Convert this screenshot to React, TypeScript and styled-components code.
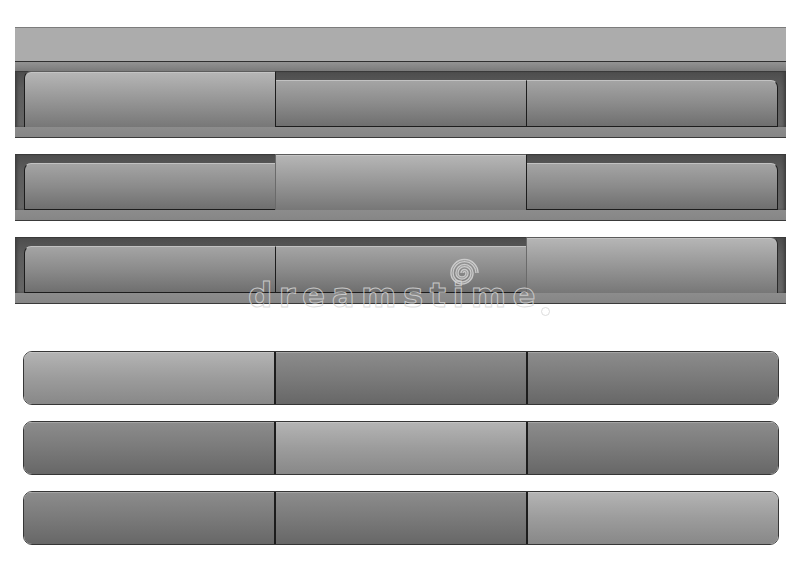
import styled, { createGlobalStyle, css } from "styled-components";

const GlobalStyle = createGlobalStyle`
  html, body {
    margin: 0;
    padding: 0;
    background: #fff;
  }
  body {
    font-family: "DejaVu Sans", sans-serif;
  }
`;

const Page = styled.div`
  position: relative;
  width: 800px;
  height: 574px;
  box-sizing: border-box;
  padding: 27px 14px 0 15px;
  display: flex;
  flex-direction: column;
  overflow: hidden;
`;

const TabBar = styled.div`
  display: flex;
  flex-direction: column;
  margin-bottom: 16px;
`;

const Header = styled.div`
  height: 33px;
  background: #acacac;
  border-top: 1px solid #7c7c7c;
  border-bottom: 1px solid #2f2f2f;
`;

const Stripe = styled.div`
  height: 9px;
  background: linear-gradient(#939393, #7a7a7a);
`;

const Track = styled.div`
  height: 56px;
  display: flex;
  align-items: flex-end;
  padding: 0 8px 0 9px;
  background: linear-gradient(#4c4c4c, #5c5c5c 30%, #666);
  box-shadow: inset 0 1px 0 #3a3a3a, inset 3px 0 3px -1px #3e3e3e,
    inset -3px 0 3px -1px #3e3e3e;
`;

type Pos = "first" | "mid" | "last";

const Tab = styled.div<{ $active?: boolean; $pos: Pos }>`
  flex: 1;
  box-sizing: border-box;
  height: 47px;
  border: 1px solid #1c1c1c;
  border-top-color: #c2c2c2;
  background: linear-gradient(#a4a4a4, #8b8b8b 50%, #6f6f6f);
  margin-left: ${(p) => (p.$pos === "first" ? "0" : "-1px")};
  border-top-left-radius: ${(p) => (p.$pos === "first" ? "7px" : "0")};
  border-top-right-radius: ${(p) => (p.$pos === "last" ? "7px" : "0")};

  ${(p) =>
    p.$active &&
    css`
      position: relative;
      height: 100%;
      border-bottom: none;
      border-top-color: #5c5c5c;
      border-left-color: ${p.$pos === "first" ? "#1c1c1c" : "#6a6a6a"};
      border-right-color: ${p.$pos === "last" ? "#2a2a2a" : "#1c1c1c"};
      background: linear-gradient(#b6b6b6, #979797 50%, #777);
      box-shadow: inset 0 1px 0 #c4c4c4;
    `}
`;

const BottomStrip = styled.div`
  height: 10px;
  background: linear-gradient(#8c8c8c, #868686);
  border-bottom: 1px solid #3a3a3a;
`;

const ButtonList = styled.div`
  display: flex;
  flex-direction: column;
  gap: 16px;
  margin-top: 31px;
  padding: 0 7px 0 8px;
`;

const ButtonRow = styled.div`
  display: flex;
  height: 54px;
  box-sizing: border-box;
  border: 1px solid #363636;
  border-radius: 9px;
  overflow: hidden;
`;

const Segment = styled.div<{ $active?: boolean }>`
  flex: 1;
  background: ${(p) =>
    p.$active
      ? "linear-gradient(#b4b4b4, #9c9c9c 50%, #888)"
      : "linear-gradient(#8c8c8c, #7a7a7a 50%, #676767)"};
  box-shadow: inset 0 1px 0 rgba(255, 255, 255, 0.22);

  & + & {
    border-left: 2px solid #1c1c1c;
  }
`;

const Watermark = styled.div`
  position: absolute;
  left: 248px;
  top: 256px;
  width: 310px;
  height: 62px;
  pointer-events: none;
`;

const MarkText = styled.span`
  position: absolute;
  left: 0;
  top: 19px;
  font-family: "DejaVu Sans", sans-serif;
  font-weight: 700;
  font-size: 34px;
  line-height: 40px;
  letter-spacing: 6.5px;
  color: transparent;
  -webkit-text-stroke: 1px rgba(214, 214, 214, 0.85);
`;

const Spiral = styled.svg`
  position: absolute;
  left: 199px;
  top: 1px;
`;

const Registered = styled.span`
  position: absolute;
  left: 293px;
  top: 51px;
  width: 7px;
  height: 7px;
  border-radius: 50%;
  border: 1px solid rgba(214, 214, 214, 0.85);
`;

const bars: { active: number; header?: boolean }[] = [
  { active: 0, header: true },
  { active: 1 },
  { active: 2 },
];

const positions: Pos[] = ["first", "mid", "last"];

const spiralPath =
  "M15 16 a2.5 2.5 0 0 1 5 0 a5 5 0 0 1 -10 0 a7.5 7.5 0 0 1 15 0 a10 10 0 0 1 -20 0 a12.5 12.5 0 0 1 25 0";

export default function App() {
  return (
    <Page>
      <GlobalStyle />
      {bars.map((bar, i) => (
        <TabBar key={i}>
          {bar.header && (
            <>
              <Header />
              <Stripe />
            </>
          )}
          <Track>
            {positions.map((pos, j) => (
              <Tab key={pos} $pos={pos} $active={j === bar.active} />
            ))}
          </Track>
          <BottomStrip />
        </TabBar>
      ))}

      <ButtonList>
        {[0, 1, 2].map((active) => (
          <ButtonRow key={active}>
            {[0, 1, 2].map((j) => (
              <Segment key={j} $active={j === active} />
            ))}
          </ButtonRow>
        ))}
      </ButtonList>

      <Watermark>
        <Spiral width="32" height="32" viewBox="0 0 32 32">
          <path
            d={spiralPath}
            fill="none"
            stroke="rgba(214,214,214,0.85)"
            strokeWidth="3.5"
          />
          <path d={spiralPath} fill="none" stroke="#9a9a9a" strokeWidth="1" />
        </Spiral>
        <MarkText>dreamstime</MarkText>
        <Registered />
      </Watermark>
    </Page>
  );
}
